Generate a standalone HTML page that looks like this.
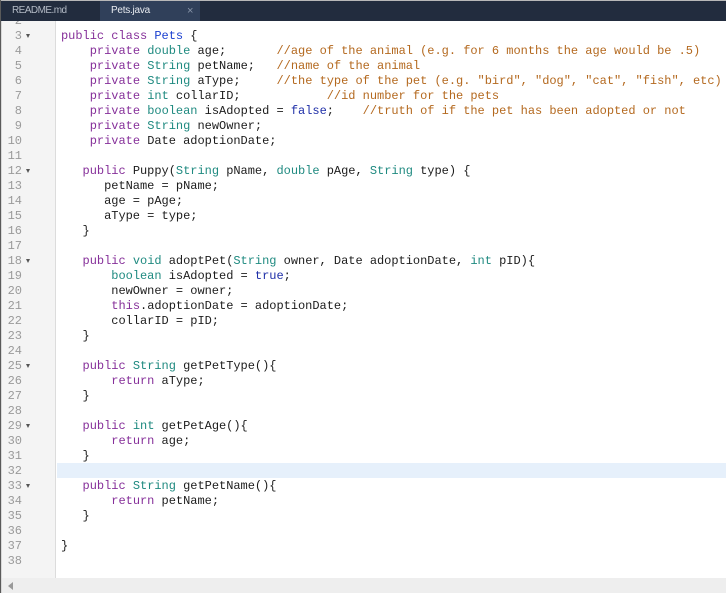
<!DOCTYPE html>
<html><head><meta charset="utf-8">
<style>
html,body{margin:0;padding:0;background:#fff;}
#root{position:relative;width:726px;height:593px;overflow:hidden;background:#fff;}
.abs{position:absolute;}
#top{left:0;top:0;width:726px;height:1px;background:#b8b8b8;}
#bar{left:1px;top:1px;width:725px;height:20px;background:#222c3e;}
.tab{position:absolute;font:10px/20px "Liberation Sans",sans-serif;color:#b4bbc6;white-space:pre;}
#active{left:100px;top:1px;width:100px;height:20px;background:#30405a;}
#leftb{left:0;top:0;width:1px;height:593px;background:#5a5a5a;}
#leftb2{left:1px;top:21px;width:1px;height:572px;background:#d8d8d8;}
#gutter{left:2px;top:21px;width:53px;height:557px;background:#f4f4f4;}
#gline{left:55px;top:21px;width:1px;height:557px;background:#dcdcdc;}
#hl{left:57px;top:463px;width:669px;height:15px;background:#e6f0fb;}
#hscroll{left:2px;top:578px;width:724px;height:15px;background:#eeeeee;}
#nums{left:1px;top:14px;width:21px;text-align:right;font:12px/15px "Liberation Mono",monospace;color:#9a9a9a;white-space:pre;}
#code{left:61px;top:29px;font:12px/15px "Liberation Mono",monospace;letter-spacing:-0.02px;color:#1c1c1c;white-space:pre;margin:0;}
.k{color:#86309a;}.t{color:#1f8a80;}.c{color:#b4691f;}.n{color:#1a3fd0;}.b{color:#1f2fa8;}
.fold{position:absolute;left:26px;width:0;height:0;border-left:2.5px solid transparent;border-right:2.5px solid transparent;border-top:4px solid #555;}
#sl{left:8px;top:582px;width:0;height:0;border-top:4px solid transparent;border-bottom:4px solid transparent;border-right:5px solid #999;}
</style></head><body>
<div id="root">
<div class="abs" id="gutter"></div>
<div class="abs" id="gline"></div>
<div class="abs" id="hl"></div>
<div class="abs" id="hscroll"></div>
<div class="abs" id="sl"></div>
<div class="abs" id="nums">2
3
4
5
6
7
8
9
10
11
12
13
14
15
16
17
18
19
20
21
22
23
24
25
26
27
28
29
30
31
32
33
34
35
36
37
38</div>
<div class="fold" style="top:34px"></div>
<div class="fold" style="top:169px"></div>
<div class="fold" style="top:259px"></div>
<div class="fold" style="top:364px"></div>
<div class="fold" style="top:424px"></div>
<div class="fold" style="top:484px"></div>
<pre class="abs" id="code"><span class="k">public</span> <span class="k">class</span> <span class="n">Pets</span> {
    <span class="k">private</span> <span class="t">double</span> age;       <span class="c">//age of the animal (e.g. for 6 months the age would be .5)</span>
    <span class="k">private</span> <span class="t">String</span> petName;   <span class="c">//name of the animal</span>
    <span class="k">private</span> <span class="t">String</span> aType;     <span class="c">//the type of the pet (e.g. "bird", "dog", "cat", "fish", etc)</span>
    <span class="k">private</span> <span class="t">int</span> collarID;            <span class="c">//id number for the pets</span>
    <span class="k">private</span> <span class="t">boolean</span> isAdopted = <span class="b">false</span>;    <span class="c">//truth of if the pet has been adopted or not</span>
    <span class="k">private</span> <span class="t">String</span> newOwner;
    <span class="k">private</span> Date adoptionDate;

   <span class="k">public</span> Puppy(<span class="t">String</span> pName, <span class="t">double</span> pAge, <span class="t">String</span> type) {
      petName = pName;
      age = pAge;
      aType = type;
   }

   <span class="k">public</span> <span class="t">void</span> adoptPet(<span class="t">String</span> owner, Date adoptionDate, <span class="t">int</span> pID){
       <span class="t">boolean</span> isAdopted = <span class="b">true</span>;
       newOwner = owner;
       <span class="k">this</span>.adoptionDate = adoptionDate;
       collarID = pID;
   }

   <span class="k">public</span> <span class="t">String</span> getPetType(){
       <span class="k">return</span> aType;
   }

   <span class="k">public</span> <span class="t">int</span> getPetAge(){
       <span class="k">return</span> age;
   }

   <span class="k">public</span> <span class="t">String</span> getPetName(){
       <span class="k">return</span> petName;
   }

}</pre>
<div class="abs" id="top"></div>
<div class="abs" id="bar"></div>
<div class="abs" id="active"></div>
<div class="tab" style="left:12px;top:1px;letter-spacing:-0.55px;">README.md</div>
<div class="tab" style="left:111px;top:1px;color:#e8ebf0;letter-spacing:-0.25px;">Pets.java</div>
<div class="tab" style="left:187px;top:1px;color:#8794a8;font-size:11px;">×</div>
<div class="abs" id="leftb"></div>
<div class="abs" id="leftb2"></div>
</div>
</body></html>
